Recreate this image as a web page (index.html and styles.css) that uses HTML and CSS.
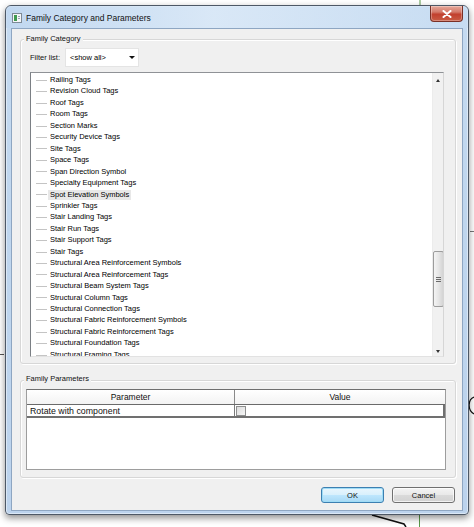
FILE: index.html
```html
<!DOCTYPE html>
<html>
<head>
<meta charset="utf-8">
<link rel="stylesheet" href="styles.css">
</head>
<body>
<svg class="bg-marks" width="474" height="527" viewBox="0 0 474 527">
  <line x1="420" y1="0" x2="420" y2="6" stroke="#5a9a4a" stroke-width="1"/>
  <line x1="419.5" y1="515" x2="419.5" y2="527" stroke="#5a9a4a" stroke-width="1"/>
  <polyline points="372,515 404,524 406,527" fill="none" stroke="#111" stroke-width="1.5"/>
  <path d="M474,397 C468,399 467,410 474,414" fill="none" stroke="#111" stroke-width="1.2"/>
  <line x1="0" y1="354.5" x2="4" y2="354.5" stroke="#555" stroke-width="1"/>
  <line x1="470" y1="231.5" x2="474" y2="231.5" stroke="#777" stroke-width="1"/>
</svg>
<div class="window">
  <div class="titlebar">
    <svg class="app-icon" width="10" height="10" viewBox="0 0 10 10">
      <rect x="0.5" y="0.5" width="9" height="9" fill="#f4f6f8" stroke="#7d8a96"/>
      <rect x="2" y="2" width="3" height="6" fill="#3f9a52"/>
      <rect x="6" y="3" width="2" height="1" fill="#9aa6b0"/>
      <rect x="6" y="5" width="2" height="1" fill="#9aa6b0"/>
    </svg>
    <span class="title">Family Category and Parameters</span>
    <div class="close">
      <svg width="10" height="8" viewBox="0 0 10 8">
        <path d="M1.5,1 L8.5,7 M8.5,1 L1.5,7" stroke="#fff" stroke-width="2" stroke-linecap="round"/>
      </svg>
    </div>
  </div>
  <div class="client">
    <div class="group group-cat">
      <div class="group-title">Family Category</div>
      <div class="filter-row">
        <span class="filter-label">Filter list:</span>
        <div class="combo"><span class="combo-text">&lt;show all&gt;</span><span class="combo-arrow"></span></div>
      </div>
      <div class="listbox">
        <ul class="tree">
          <li><span class="branch"></span><span class="label">Railing Tags</span></li>
          <li><span class="branch"></span><span class="label">Revision Cloud Tags</span></li>
          <li><span class="branch"></span><span class="label">Roof Tags</span></li>
          <li><span class="branch"></span><span class="label">Room Tags</span></li>
          <li><span class="branch"></span><span class="label">Section Marks</span></li>
          <li><span class="branch"></span><span class="label">Security Device Tags</span></li>
          <li><span class="branch"></span><span class="label">Site Tags</span></li>
          <li><span class="branch"></span><span class="label">Space Tags</span></li>
          <li><span class="branch"></span><span class="label">Span Direction Symbol</span></li>
          <li><span class="branch"></span><span class="label">Specialty Equipment Tags</span></li>
          <li><span class="branch"></span><span class="label selected">Spot Elevation Symbols</span></li>
          <li><span class="branch"></span><span class="label">Sprinkler Tags</span></li>
          <li><span class="branch"></span><span class="label">Stair Landing Tags</span></li>
          <li><span class="branch"></span><span class="label">Stair Run Tags</span></li>
          <li><span class="branch"></span><span class="label">Stair Support Tags</span></li>
          <li><span class="branch"></span><span class="label">Stair Tags</span></li>
          <li><span class="branch"></span><span class="label">Structural Area Reinforcement Symbols</span></li>
          <li><span class="branch"></span><span class="label">Structural Area Reinforcement Tags</span></li>
          <li><span class="branch"></span><span class="label">Structural Beam System Tags</span></li>
          <li><span class="branch"></span><span class="label">Structural Column Tags</span></li>
          <li><span class="branch"></span><span class="label">Structural Connection Tags</span></li>
          <li><span class="branch"></span><span class="label">Structural Fabric Reinforcement Symbols</span></li>
          <li><span class="branch"></span><span class="label">Structural Fabric Reinforcement Tags</span></li>
          <li><span class="branch"></span><span class="label">Structural Foundation Tags</span></li>
          <li><span class="branch"></span><span class="label">Structural Framing Tags</span></li>
        </ul>
        <div class="vscroll">
          <div class="sb-btn sb-up"><span class="arr-up"></span></div>
          <div class="sb-track">
            <div class="sb-thumb"><span class="grip"></span></div>
          </div>
          <div class="sb-btn sb-down"><span class="arr-down"></span></div>
        </div>
      </div>
    </div>
    <div class="group group-params">
      <div class="group-title">Family Parameters</div>
      <div class="ptable">
        <div class="prow phead">
          <div class="pcell pcell-name">Parameter</div>
          <div class="pcell pcell-val">Value</div>
        </div>
        <div class="prow pdata">
          <div class="pcell pcell-name">Rotate with component</div>
          <div class="pcell pcell-val"><span class="checkbox"></span></div>
        </div>
      </div>
    </div>
    <div class="buttons">
      <button class="btn btn-default">OK</button>
      <button class="btn">Cancel</button>
    </div>
  </div>
</div>
</body>
</html>
```

FILE: styles.css
```css
* { box-sizing: border-box; }
html, body { margin: 0; padding: 0; }
body {
  width: 474px;
  height: 527px;
  background: #ffffff;
  position: relative;
  overflow: hidden;
  font-family: "Liberation Sans", Arial, sans-serif;
  color: #000;
}
.bg-marks {
  position: absolute;
  left: 0;
  top: 0;
  z-index: 0;
}
.window {
  position: relative;
  z-index: 1;
  margin: 5px 0 0 5px;
  width: 464px;
  height: 510px;
  border: 1px solid #4d5866;
  border-radius: 6px 6px 4px 4px;
  background: linear-gradient(180deg, #c6dbf1 0%, #bfd6ee 40%, #bcd3ed 100%);
  box-shadow: 0 3px 7px rgba(0,0,0,0.45), inset 0 0 0 1px rgba(255,255,255,0.45);
  display: flex;
  flex-direction: column;
}
.titlebar {
  height: 22px;
  display: flex;
  align-items: center;
  padding-left: 6px;
  background: linear-gradient(90deg, rgba(190,214,240,0.6) 0%, rgba(222,235,248,0.8) 45%, rgba(200,221,243,0.6) 100%);
  border-radius: 5px 5px 0 0;
}
.app-icon { flex: none; margin-top: 1px; }
.title {
  margin-left: 4px;
  font-size: 8.5px;
  color: #111;
  margin-top: 1px;
}
.close {
  margin-left: auto;
  margin-right: 5px;
  align-self: flex-start;
  width: 33px;
  height: 16px;
  border: 1px solid #7a3026;
  border-top: none;
  border-radius: 0 0 4px 4px;
  background: linear-gradient(180deg, #e6a99b 0%, #d47a6a 40%, #c2402e 55%, #c95c44 100%);
  display: flex;
  align-items: center;
  justify-content: center;
  box-shadow: inset 0 0 0 1px rgba(255,255,255,0.3);
}
.client {
  margin: 0 5px 3px 5px;
  height: 483px;
  border: 1px solid #8ea6c2;
  background: #f0f0f0;
  display: flex;
  flex-direction: column;
  font-size: 7.5px;
}
.group {
  margin-left: 8px;
  width: 436px;
  border: 1px solid #d7d7d7;
  border-radius: 3px;
  box-shadow: 1px 1px 0 #fff, inset 1px 1px 0 #fff;
}
.group-cat { margin-top: 10px; padding: 0 0 6px 0; }
.group-params { margin-top: 16px; padding: 0 0 7px 0; }
.group-title {
  margin: -6px 0 0 3px;
  padding: 0 2px;
  width: fit-content;
  line-height: 10px;
  height: 10px;
  background: #f0f0f0;
  color: #111;
}
.group-params .group-title { margin-top: -7px; }
.filter-row {
  margin: 4px 0 0 9px;
  display: flex;
  align-items: center;
  height: 19px;
}
.filter-label { color: #111; }
.combo {
  margin-left: 5px;
  width: 74px;
  height: 19px;
  background: #fff;
  border: 1px solid #e4e4e4;
  display: flex;
  align-items: center;
  padding-left: 4px;
}
.combo-text { flex: 1; }
.combo-arrow {
  width: 0;
  height: 0;
  border-left: 3px solid transparent;
  border-right: 3px solid transparent;
  border-top: 3px solid #111;
  margin-right: 3px;
}
.listbox {
  margin: 5px 0 0 9px;
  width: 414px;
  height: 285px;
  background: #fff;
  border-top: 1px solid #8f9296;
  border-left: 1px solid #7b7f84;
  border-right: 1px solid #d6d6d6;
  border-bottom: 1px solid #e2e2e2;
  display: flex;
  overflow: hidden;
}
.tree {
  list-style: none;
  margin: 0;
  padding: 1.5px 0 0 0;
  flex: 1;
  overflow: hidden;
}
.tree li {
  height: 11.46px;
  line-height: 11.46px;
  display: flex;
  align-items: center;
  white-space: nowrap;
  color: #000;
}
.branch {
  margin-left: 5px;
  width: 11px;
  height: 0;
  border-top: 1px solid #c4c4c4;
}
.label {
  margin-left: 1px;
  padding: 0 2px;
  height: 10.5px;
  line-height: 10.5px;
}
.label.selected { background: #e8e8e8; }
.vscroll {
  width: 11px;
  flex: none;
  background: #f1f1f1;
  border-left: 1px solid #ececec;
  display: flex;
  flex-direction: column;
}
.sb-btn {
  display: flex;
  align-items: center;
  justify-content: center;
}
.sb-up { height: 14px; }
.sb-down { height: 9px; }
.sb-track { flex: 1; }
.arr-up {
  width: 0; height: 0;
  border-left: 2.5px solid transparent;
  border-right: 2.5px solid transparent;
  border-bottom: 3px solid #333;
}
.arr-down {
  width: 0; height: 0;
  border-left: 2.5px solid transparent;
  border-right: 2.5px solid transparent;
  border-top: 3px solid #333;
}
.sb-thumb {
  margin-top: 164px;
  width: 11px;
  height: 56px;
  border: 1px solid #9c9c9c;
  border-radius: 2px;
  background: linear-gradient(90deg, #f4f4f4 0%, #e6e6e6 50%, #d4d4d4 100%);
  display: flex;
  align-items: center;
  justify-content: center;
}
.grip {
  width: 5px;
  height: 5px;
  border-top: 1px solid #6a6a6a;
  border-bottom: 1px solid #6a6a6a;
  background: linear-gradient(180deg, transparent 40%, #6a6a6a 40%, #6a6a6a 60%, transparent 60%);
}
.ptable {
  margin: 5px 0 0 5px;
  width: 420px;
  height: 81px;
  background: #fff;
  border: 1px solid #9d9d9d;
  border-top-color: #6f6f6f;
}
.prow {
  display: grid;
  grid-template-columns: 208px 1fr;
}
.phead {
  height: 15px;
  border-bottom: 1px solid #6a6a6a;
  background: linear-gradient(180deg, #ffffff 0%, #f3f3f3 100%);
}
.pdata {
  height: 13px;
  border-bottom: 2px solid #707070;
  border-right: 2px solid #707070;
}
.pcell {
  font-size: 8.5px;
  color: #111;
  display: flex;
  align-items: center;
}
.phead .pcell { justify-content: center; }
.phead .pcell-name { border-right: 1px solid #8a8a8a; }
.pdata .pcell-name {
  border-right: 1px solid #7a7a7a;
  padding-left: 3px;
  font-size: 8.8px;
}
.pdata .pcell-val { padding-left: 1px; }
.checkbox {
  width: 10px;
  height: 10px;
  border: 1px solid #8e8f8f;
  background: linear-gradient(135deg, #dcdcdc 0%, #f6f6f6 100%);
}
.buttons {
  margin-top: 9px;
  padding-right: 7px;
  display: flex;
  justify-content: flex-end;
  gap: 8px;
}
.btn {
  width: 63px;
  height: 16px;
  padding: 0;
  font-family: "Liberation Sans", Arial, sans-serif;
  font-size: 7.5px;
  color: #111;
  border: 1px solid #707070;
  border-radius: 3px;
  background: linear-gradient(180deg, #f4f4f4 0%, #e9e9e9 48%, #dadada 52%, #d2d2d2 100%);
  box-shadow: inset 0 0 0 1px rgba(255,255,255,0.7);
}
.btn-default {
  border-color: #3c7fb1;
  background: linear-gradient(180deg, #eaf6fd 0%, #d9f0fc 48%, #bee6fd 52%, #a7d9f5 100%);
  box-shadow: inset 0 0 0 1px #9fdcf6;
}
```
